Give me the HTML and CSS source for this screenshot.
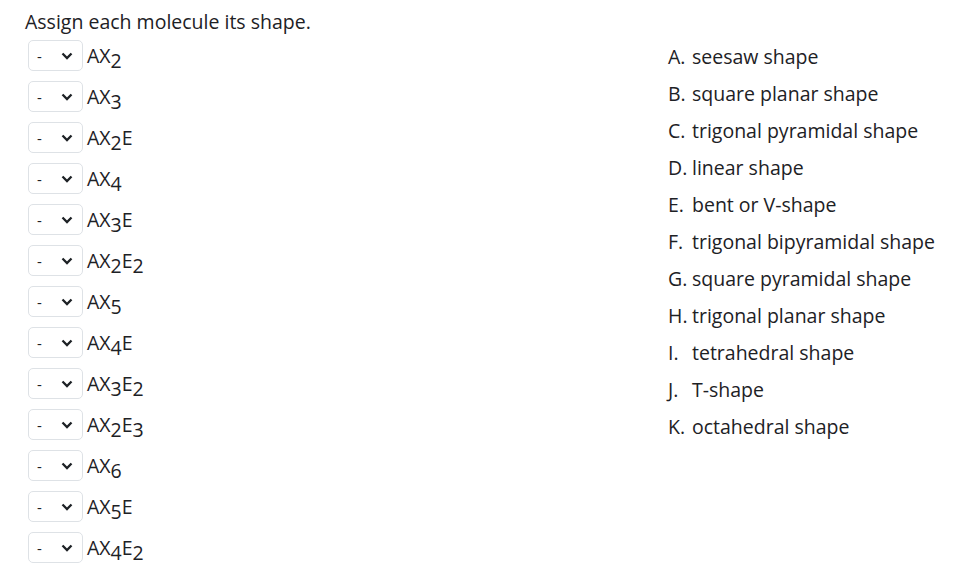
FILE: index.html
```html
<!DOCTYPE html>
<html>
<head>
<meta charset="utf-8">
<link rel="stylesheet" href="styles.css">
</head>
<body>
<div class="question">
  <p class="qtext">Assign each molecule its shape.</p>
  <div class="match">
    <div class="stems">
      <div class="row"><span class="sel">-<svg viewBox="0 0 12 8"><path d="M1.5 1.5 L6 6 L10.5 1.5"/></svg></span><span class="lbl">AX<sub>2</sub></span></div>
      <div class="row"><span class="sel">-<svg viewBox="0 0 12 8"><path d="M1.5 1.5 L6 6 L10.5 1.5"/></svg></span><span class="lbl">AX<sub>3</sub></span></div>
      <div class="row"><span class="sel">-<svg viewBox="0 0 12 8"><path d="M1.5 1.5 L6 6 L10.5 1.5"/></svg></span><span class="lbl">AX<sub>2</sub>E</span></div>
      <div class="row"><span class="sel">-<svg viewBox="0 0 12 8"><path d="M1.5 1.5 L6 6 L10.5 1.5"/></svg></span><span class="lbl">AX<sub>4</sub></span></div>
      <div class="row"><span class="sel">-<svg viewBox="0 0 12 8"><path d="M1.5 1.5 L6 6 L10.5 1.5"/></svg></span><span class="lbl">AX<sub>3</sub>E</span></div>
      <div class="row"><span class="sel">-<svg viewBox="0 0 12 8"><path d="M1.5 1.5 L6 6 L10.5 1.5"/></svg></span><span class="lbl">AX<sub>2</sub>E<sub>2</sub></span></div>
      <div class="row"><span class="sel">-<svg viewBox="0 0 12 8"><path d="M1.5 1.5 L6 6 L10.5 1.5"/></svg></span><span class="lbl">AX<sub>5</sub></span></div>
      <div class="row"><span class="sel">-<svg viewBox="0 0 12 8"><path d="M1.5 1.5 L6 6 L10.5 1.5"/></svg></span><span class="lbl">AX<sub>4</sub>E</span></div>
      <div class="row"><span class="sel">-<svg viewBox="0 0 12 8"><path d="M1.5 1.5 L6 6 L10.5 1.5"/></svg></span><span class="lbl">AX<sub>3</sub>E<sub>2</sub></span></div>
      <div class="row"><span class="sel">-<svg viewBox="0 0 12 8"><path d="M1.5 1.5 L6 6 L10.5 1.5"/></svg></span><span class="lbl">AX<sub>2</sub>E<sub>3</sub></span></div>
      <div class="row"><span class="sel">-<svg viewBox="0 0 12 8"><path d="M1.5 1.5 L6 6 L10.5 1.5"/></svg></span><span class="lbl">AX<sub>6</sub></span></div>
      <div class="row"><span class="sel">-<svg viewBox="0 0 12 8"><path d="M1.5 1.5 L6 6 L10.5 1.5"/></svg></span><span class="lbl">AX<sub>5</sub>E</span></div>
      <div class="row"><span class="sel">-<svg viewBox="0 0 12 8"><path d="M1.5 1.5 L6 6 L10.5 1.5"/></svg></span><span class="lbl">AX<sub>4</sub>E<sub>2</sub></span></div>
    </div>
    <ol class="choices">
      <li><span class="let">A.</span>seesaw shape</li>
      <li><span class="let">B.</span>square planar shape</li>
      <li><span class="let">C.</span>trigonal pyramidal shape</li>
      <li><span class="let">D.</span>linear shape</li>
      <li><span class="let">E.</span>bent or V-shape</li>
      <li><span class="let">F.</span>trigonal bipyramidal shape</li>
      <li><span class="let">G.</span>square pyramidal shape</li>
      <li><span class="let">H.</span>trigonal planar shape</li>
      <li><span class="let">I.</span>tetrahedral shape</li>
      <li><span class="let">J.</span>T-shape</li>
      <li><span class="let">K.</span>octahedral shape</li>
    </ol>
  </div>
</div>
</body>
</html>
```

FILE: styles.css
```css
html, body {
  margin: 0;
  background: #fff;
}
body {
  font-family: "Open Sans", "Liberation Sans", sans-serif;
  color: #1d2125;
}
.question {
  padding: 8px 0 0 25px;
}
.qtext {
  margin: 0 0 5px;
  font-size: 19.5px;
  line-height: 27px;
}
.match {
  display: flex;
}
.stems {
  width: 640px;
  display: flex;
  flex-direction: column;
  gap: 10px;
  padding-left: 3px;
}
.row {
  display: flex;
  align-items: center;
  height: 31px;
}
.sel {
  box-sizing: border-box;
  width: 55px;
  height: 31px;
  border: 1px solid #dee2e6;
  border-radius: 5px;
  display: flex;
  align-items: center;
  justify-content: space-between;
  padding: 0 9px 0 8px;
  font-size: 15px;
  color: #1d2125;
}
.sel svg {
  width: 12px;
  height: 8px;
  fill: none;
  stroke: #1d2125;
  stroke-width: 2.3;
}
.lbl {
  margin-left: 4px;
  font-size: 19.5px;
  line-height: 24px;
}
.lbl sub {
  font-size: 1em;
  vertical-align: -0.28em;
  line-height: 0;
}
.choices {
  list-style: none;
  margin: -2px 0 0;
  padding: 0;
}
.choices li {
  font-size: 19.5px;
  line-height: 37px;
  display: flex;
}
.let {
  width: 24px;
}
```
